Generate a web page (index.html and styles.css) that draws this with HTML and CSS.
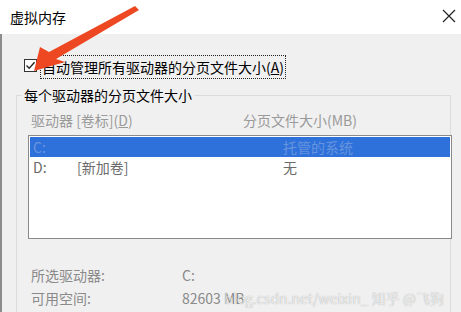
FILE: index.html
```html
<!DOCTYPE html>
<html lang="zh">
<head>
<meta charset="utf-8">
<title>虚拟内存</title>
<link rel="stylesheet" href="styles.css">
</head>
<body>
<div class="window">
  <div class="titlebar">
    <span class="title">虚拟内存</span>
    <svg class="close" width="14" height="14" viewBox="0 0 14 14"><path d="M1 1L13 13M13 1L1 13" stroke="#222" stroke-width="1.2" fill="none"/></svg>
  </div>
  <div class="content">
    <div class="auto-row">
      <span class="checkbox"><svg width="11" height="11" viewBox="0 0 11 11"><path d="M1.5 5.5L4.2 8.3L9.6 2.2" stroke="#222" stroke-width="1.3" fill="none"/></svg></span>
      <span class="focus-label">自动管理所有驱动器的分页文件大小(<u>A</u>)</span>
    </div>
    <fieldset class="group">
      <legend>每个驱动器的分页文件大小</legend>
      <div class="col-headers">
        <span>驱动器 [卷标](<u>D</u>)</span>
        <span>分页文件大小(MB)</span>
      </div>
      <div class="listbox">
        <div class="row selected"><span>C:</span><span></span><span>托管的系统</span></div>
        <div class="row"><span>D:</span><span>[新加卷]</span><span>无</span></div>
      </div>
      <div class="info">
        <span>所选驱动器:</span><span>C:</span>
        <span>可用空间:</span><span>82603 MB</span>
      </div>
    </fieldset>
  </div>
  <svg class="arrow" width="461" height="312" viewBox="0 0 461 312">
    <polygon points="34,71 40,47 49,52 135,6 139,10 56,59 65,62" fill="#ee4823"/>
  </svg>
  <div class="watermark">blog.csdn.net/weixin_ 知乎 @飞狗</div>
</div>
</body>
</html>
```
FILE: styles.css
```css
* { box-sizing: border-box; }
html, body { margin: 0; padding: 0; }
body {
  width: 461px;
  height: 312px;
  overflow: hidden;
  font-family: "Noto Sans CJK SC", "Noto Sans", sans-serif;
  font-size: 14px;
  color: #000;
  background: #f0f0f0;
}
.window {
  position: relative;
  width: 461px;
  height: 312px;
  display: flex;
  flex-direction: column;
}
.titlebar {
  height: 34px;
  background: #fff;
  display: flex;
  align-items: center;
  justify-content: space-between;
  padding: 0 5px 0 10px;
  flex: none;
}
.title { line-height: 20px; }
.close { margin-top: -2px; }
.content {
  flex: 1;
  background: #f0f0f0;
  border-left: 2px solid #8c8c8c;
  padding-top: 21px;
}
.auto-row {
  display: flex;
  align-items: center;
  padding-left: 22px;
  height: 24px;
}
.checkbox {
  width: 13px;
  height: 13px;
  border: 1px solid #333;
  background: #fff;
  display: flex;
  align-items: center;
  justify-content: center;
  margin-right: 3px;
  margin-top: -3px;
}
.focus-label {
  border: 1px dotted #222;
  line-height: 22px;
  padding: 0 1px;
}
.group {
  margin: 7px 10px 0 14px;
  padding: 7px 0 0 11px;
  border: 1px solid #dcdcdc;
  min-width: 0;
  height: 240px;
}
.group legend {
  margin-left: -6px;
  padding: 0 2px;
  line-height: 18px;
}
.col-headers {
  display: grid;
  grid-template-columns: 212px 1fr;
  padding-left: 3px;
  line-height: 18px;
  color: #9a9a9a;
}
.listbox {
  margin-top: 6px;
  margin-right: -2px;
  height: 104px;
  background: #fff;
  border: 1px solid #8a8a8a;
  padding: 1px;
}
.row {
  display: grid;
  grid-template-columns: 44px 206px 1fr;
  height: 20px;
  line-height: 20px;
  padding-left: 3px;
  color: #6b6b6b;
}
.row.selected {
  background: #2e71da;
  color: #6794de;
}
.info {
  display: grid;
  grid-template-columns: 151px 1fr;
  padding-left: 3px;
  margin-top: 25px;
  line-height: 23px;
  color: #8a8a8a;
}
.arrow {
  position: absolute;
  left: 0;
  top: 0;
  pointer-events: none;
}
.watermark {
  position: absolute;
  left: 224px;
  top: 288px;
  font-size: 14px;
  line-height: 20px;
  color: rgba(255, 255, 255, 0.75);
  text-shadow: 0 0 1px rgba(0, 0, 0, 0.35);
  white-space: nowrap;
  pointer-events: none;
}
```
